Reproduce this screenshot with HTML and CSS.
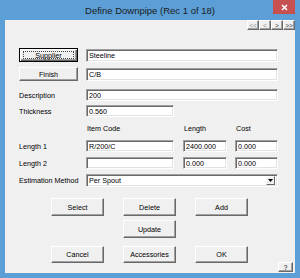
FILE: index.html
```html
<!DOCTYPE html>
<html lang="en">
<head>
    <meta charset="UTF-8">
    <title>Define Downpipe</title>
    <link rel="stylesheet" href="styles.css">
</head>
<body>
    <div class="window">
        <div class="titlebar">
            <div class="title">Define Downpipe (Rec 1 of 18)</div>
            <div class="close">
                <svg width="7" height="7" viewBox="0 0 7 7"><path d="M1 1L6 6M6 1L1 6" stroke="#fff" stroke-width="1.6"/></svg>
            </div>
        </div>
        <div class="client">
            <div class="nav">
                <button class="btn navbtn off">&lt;&lt;</button>
                <button class="btn navbtn off">&lt;</button>
                <button class="btn navbtn">&gt;</button>
                <button class="btn navbtn">&gt;&gt;</button>
            </div>

            <div class="form">
                <div class="row r-supplier">
                    <button class="btn lbtn default">Supplier</button>
                    <input class="field wide" type="text" value="Steeline">
                </div>
                <div class="row r-finish">
                    <button class="btn lbtn">Finish</button>
                    <input class="field wide" type="text" value="C/B">
                </div>
                <div class="row r-desc">
                    <label class="lbl">Description</label>
                    <input class="field wide" type="text" value="200">
                </div>
                <div class="row r-thick">
                    <label class="lbl">Thickness</label>
                    <input class="field code" type="text" value="0.560">
                </div>
                <div class="row r-head">
                    <span class="lbl"></span>
                    <span class="col code">Item Code</span>
                    <span class="col len">Length</span>
                    <span class="col cost">Cost</span>
                </div>
                <div class="row r-len1">
                    <label class="lbl">Length 1</label>
                    <input class="field code" type="text" value="R/200/C">
                    <input class="field len" type="text" value="2400.000">
                    <input class="field cost" type="text" value="0.000">
                </div>
                <div class="row r-len2">
                    <label class="lbl">Length 2</label>
                    <input class="field code" type="text" value="">
                    <input class="field len" type="text" value="0.000">
                    <input class="field cost" type="text" value="0.000">
                </div>
                <div class="row r-est">
                    <label class="lbl">Estimation Method</label>
                    <div class="field combo wide">
                        <span>Per Spout</span>
                        <span class="drop">
                            <svg width="5" height="3" viewBox="0 0 5 3"><path d="M0 0H5L2.5 3Z" fill="#000"/></svg>
                        </span>
                    </div>
                </div>
            </div>

            <div class="actions a-top">
                <button class="btn act">Select</button>
                <button class="btn act">Delete</button>
                <button class="btn act">Add</button>
            </div>
            <div class="actions a-mid">
                <button class="btn act">Update</button>
            </div>
            <div class="actions a-bottom">
                <button class="btn act">Cancel</button>
                <button class="btn act">Accessories</button>
                <button class="btn act">OK</button>
                <button class="btn help">?</button>
            </div>
        </div>
    </div>
</body>
</html>
```

FILE: styles.css
```css
body {
    margin: 0;
    font-family: "Liberation Sans", Arial, sans-serif;
    font-size: 7.2px;
    color: #000;
}
.window {
    width: 300px;
    height: 278px;
    box-sizing: border-box;
    padding-bottom: 5px;
    background: #5b9fd6;
    display: flex;
    flex-direction: column;
}
.titlebar {
    height: 20px;
    display: grid;
    grid-template-columns: 1fr auto 1fr;
    align-items: start;
}
.title {
    grid-column: 2;
    font-size: 9.5px;
    line-height: 21px;
    color: #1b1b1b;
}
.close {
    grid-column: 3;
    justify-self: end;
    margin-right: 5px;
    width: 22px;
    height: 14px;
    background: #c75050;
    display: flex;
    align-items: center;
    justify-content: center;
}
.client {
    flex: 1;
    margin: 0 5px;
    background: #f0f0f0;
}

/* raised 3d button */
.btn {
    font-family: inherit;
    font-size: 7.2px;
    color: #000;
    background: #f0f0f0;
    padding: 0;
    box-sizing: border-box;
    border: 1px solid;
    border-color: #fff #696969 #696969 #fff;
    box-shadow: inset -1px -1px #a0a0a0;
    display: flex;
    align-items: center;
    justify-content: center;
}
.btn.default {
    position: relative;
    border-color: #000;
    box-shadow: inset 1px 1px #fff, inset -1px -1px #696969, inset -2px -2px #a0a0a0;
}
.btn.default::after {
    content: "";
    position: absolute;
    inset: 2px 3px;
    border: 1px dotted #444;
}

.nav {
    display: flex;
    justify-content: flex-end;
    height: 10px;
}
.navbtn {
    width: 12px;
    height: 10px;
    font-size: 6.5px;
    color: #333;
}
.navbtn.off {
    color: #8c8c8c;
}

.form {
    padding-left: 14px;
}
.row {
    display: flex;
    align-items: center;
}
.lbl {
    width: 67px;
    flex: none;
}
.lbtn {
    width: 59px;
    height: 14px;
    margin-right: 8px;
}
.r-supplier { margin-top: 18px; height: 14px; }
.r-finish { margin-top: 5px; height: 14px; }
.r-desc { margin-top: 8px; height: 12px; }
.r-thick { margin-top: 4px; height: 12px; }
.r-head { margin-top: 6px; height: 10px; }
.r-len1 { margin-top: 7px; height: 12px; }
.r-len2 { margin-top: 5px; height: 12px; }
.r-est { margin-top: 5px; height: 13px; }

/* sunken edit box */
.field {
    font-family: inherit;
    font-size: 7.2px;
    color: #000;
    background: #fff;
    box-sizing: border-box;
    height: 12px;
    padding: 0 2px;
    margin: 0;
    border: 1px solid;
    border-color: #a0a0a0 #fff #fff #a0a0a0;
    box-shadow: inset 1px 1px #696969, inset -1px -1px #e3e3e3;
    outline: none;
}
.r-supplier .field, .r-finish .field {
    height: 13px;
}
.wide { width: 192px; }
.code { width: 88px; }
.len { width: 44px; margin-left: 9px; }
.cost { width: 43px; margin-left: 8px; }
.col {
    padding-left: 1px;
    box-sizing: border-box;
}

.combo {
    height: 13px;
    display: flex;
    align-items: center;
    justify-content: space-between;
    padding: 0 2px 0 2px;
}
.drop {
    width: 9px;
    height: 9px;
    box-sizing: border-box;
    border: 1px solid;
    border-color: #fff #696969 #696969 #fff;
    background: #f0f0f0;
    display: flex;
    align-items: center;
    justify-content: center;
}

.actions {
    display: flex;
    padding-left: 46px;
    gap: 19px;
}
.act {
    width: 53px;
    height: 18px;
}
.a-top { margin-top: 11px; }
.a-mid { margin-top: 4px; padding-left: 118px; }
.a-bottom {
    margin-top: 8px;
    height: 26px;
    align-items: flex-start;
}
.a-bottom .act { height: 17px; }
.help {
    align-self: flex-end;
    margin-left: auto;
    margin-right: 2px;
    width: 15px;
    height: 10px;
    font-size: 6.5px;
}
```
